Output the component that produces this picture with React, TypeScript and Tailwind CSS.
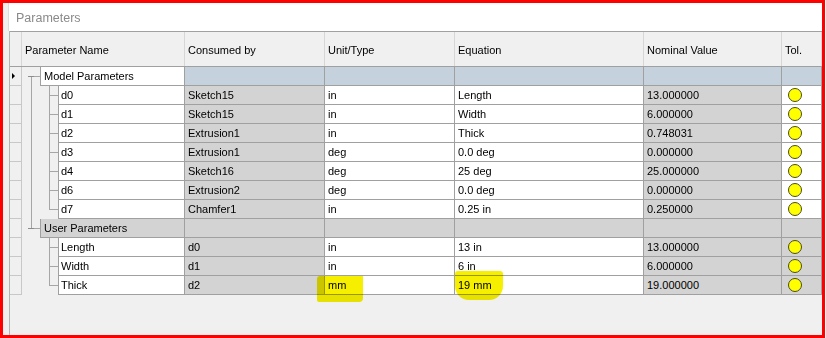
import React from "react";

/* ------------------------------------------------------------------ */
/* Parameter table data                                                */
/* ------------------------------------------------------------------ */

type Group = { kind: "group"; name: string; group: "model" | "user" };
type Item = {
  kind: "item";
  name: string;
  consumed: string;
  unit: string;
  eq: string;
  nominal: string;
  group: "model" | "user";
  last?: boolean;
  mark?: boolean;
};

const ROWS: (Group | Item)[] = [
  { kind: "group", name: "Model Parameters", group: "model" },
  { kind: "item", name: "d0", consumed: "Sketch15", unit: "in", eq: "Length", nominal: "13.000000", group: "model" },
  { kind: "item", name: "d1", consumed: "Sketch15", unit: "in", eq: "Width", nominal: "6.000000", group: "model" },
  { kind: "item", name: "d2", consumed: "Extrusion1", unit: "in", eq: "Thick", nominal: "0.748031", group: "model" },
  { kind: "item", name: "d3", consumed: "Extrusion1", unit: "deg", eq: "0.0 deg", nominal: "0.000000", group: "model" },
  { kind: "item", name: "d4", consumed: "Sketch16", unit: "deg", eq: "25 deg", nominal: "25.000000", group: "model" },
  { kind: "item", name: "d6", consumed: "Extrusion2", unit: "deg", eq: "0.0 deg", nominal: "0.000000", group: "model" },
  { kind: "item", name: "d7", consumed: "Chamfer1", unit: "in", eq: "0.25 in", nominal: "0.250000", group: "model", last: true },
  { kind: "group", name: "User Parameters", group: "user" },
  { kind: "item", name: "Length", consumed: "d0", unit: "in", eq: "13 in", nominal: "13.000000", group: "user" },
  { kind: "item", name: "Width", consumed: "d1", unit: "in", eq: "6 in", nominal: "6.000000", group: "user" },
  { kind: "item", name: "Thick", consumed: "d2", unit: "mm", eq: "19 mm", nominal: "19.000000", group: "user", last: true, mark: true },
];

const LINE = "#a6a6a6";

/* ------------------------------------------------------------------ */
/* Small drawings                                                      */
/* ------------------------------------------------------------------ */

function TreeGroup({ group }: { group: "model" | "user" }) {
  return (
    <svg width="18" height="19" className="shrink-0">
      <line x1="9.5" y1={group === "model" ? 9.5 : 0} x2="9.5" y2={group === "model" ? 19 : 9.5} stroke={LINE} />
      <line x1="9" y1="9.5" x2="18" y2="9.5" stroke={LINE} />
      <line x1="6" y1="9.5" x2="12" y2="9.5" stroke="#8c8c8c" />
    </svg>
  );
}

function TreeItem({ group, last }: { group: "model" | "user"; last?: boolean }) {
  return (
    <svg width="36" height="19" className="shrink-0">
      {group === "model" && <line x1="9.5" y1="0" x2="9.5" y2="19" stroke={LINE} />}
      <line x1="27.5" y1="0" x2="27.5" y2={last ? 9.5 : 19} stroke={LINE} />
      <line x1="27" y1="9.5" x2="36" y2="9.5" stroke={LINE} />
    </svg>
  );
}

function TolDot() {
  return (
    <svg width="16" height="16" className="ml-[2px]">
      <circle cx="8" cy="8" r="6.5" fill="#ffff00" stroke="#4a4a20" strokeWidth="1" />
    </svg>
  );
}

/* ------------------------------------------------------------------ */
/* Cells                                                               */
/* ------------------------------------------------------------------ */

function Cell({
  w,
  bg,
  children,
  className = "",
}: {
  w: string;
  bg: string;
  children?: React.ReactNode;
  className?: string;
}) {
  return (
    <div className={`${w} ${bg} ${className} relative shrink-0 h-[19px] border-r border-b border-[#a0a0a0] pl-[3px] leading-[18px] whitespace-nowrap`}>
      {children}
    </div>
  );
}

function HeadCell({ w, children }: { w: string; children?: React.ReactNode }) {
  return (
    <div className={`${w} shrink-0 h-full border-r border-[#d6d6d6] pl-[3px] pt-[3px] flex items-center`}>
      {children}
    </div>
  );
}

/* ------------------------------------------------------------------ */
/* Page                                                                */
/* ------------------------------------------------------------------ */

export default function App() {
  return (
    <div className="w-[826px] h-[338px] bg-white pr-px" style={{ fontFamily: '"Liberation Sans", Arial, sans-serif' }}>
      <div className="h-full border-[3px] border-[#ff0000] bg-[#f0f0f0] flex flex-col overflow-hidden">
        {/* Title */}
        <div className="h-[28px] shrink-0 ml-[5px] bg-white border-l border-[#dcdcdc] pl-[7px] pt-[2px] flex items-center text-[12.5px] text-[#8a8a8a]">
          Parameters
        </div>

        {/* Grid */}
        <div className="flex-1 pl-[6px]">
          <div className="h-full border-l border-[#b4b4b4] text-[11px] text-black">
            {/* Header */}
            <div className="flex h-[36px] bg-[#f0f0f0] border-t border-b border-[#a0a0a0]">
              <HeadCell w="w-[12px]" />
              <HeadCell w="w-[163px]">Parameter Name</HeadCell>
              <HeadCell w="w-[140px]">Consumed by</HeadCell>
              <HeadCell w="w-[130px]">Unit/Type</HeadCell>
              <HeadCell w="w-[189px]">Equation</HeadCell>
              <HeadCell w="w-[138px]">Nominal Value</HeadCell>
              <HeadCell w="w-[40px]">Tol.</HeadCell>
            </div>

            {ROWS.map((r, i) => {
              const rowHead = (
                <div className="w-[12px] shrink-0 h-[19px] border-r border-b border-[#c8c8c8] flex items-center pl-[2px]">
                  {i === 0 && <span className="block w-0 h-0 border-y-[3px] border-y-transparent border-l-[3px] border-l-black" />}
                </div>
              );

              if (r.kind === "group") {
                const bg = r.group === "model" ? "bg-[#c5d2de]" : "bg-[#d3d3d3]";
                return (
                  <div key={r.name} className="flex">
                    {rowHead}
                    <div className="w-[163px] shrink-0 flex h-[19px]">
                      <TreeGroup group={r.group} />
                      <div className={`flex-1 h-[19px] border border-t-0 border-[#a0a0a0] pl-[3px] leading-[18px] ${r.group === "model" ? "bg-white" : "bg-[#d3d3d3]"}`}>
                        {r.name}
                      </div>
                    </div>
                    <Cell w="w-[140px]" bg={bg} />
                    <Cell w="w-[130px]" bg={bg} />
                    <Cell w="w-[189px]" bg={bg} />
                    <Cell w="w-[138px]" bg={bg} />
                    <Cell w="w-[40px]" bg={bg} />
                  </div>
                );
              }

              const tolBg = r.group === "model" ? "bg-white" : "bg-[#d3d3d3]";
              return (
                <div key={r.name} className="flex">
                  {rowHead}
                  <div className="w-[163px] shrink-0 flex h-[19px]">
                    <TreeItem group={r.group} last={r.last} />
                    <div className="flex-1 h-[19px] bg-white border border-t-0 border-[#a0a0a0] pl-[2px] leading-[18px]">
                      {r.name}
                    </div>
                  </div>
                  <Cell w="w-[140px]" bg="bg-[#d3d3d3]">{r.consumed}</Cell>
                  <Cell w="w-[130px]" bg="bg-white">
                    {r.mark && (
                      <span className="absolute left-[-8px] top-0 w-[46px] h-[26px] bg-[#f6ef00] mix-blend-multiply rounded-br-[4px] rounded-bl-[2px] rounded-tl-[3px]" />
                    )}
                    <span className="relative">{r.unit}</span>
                  </Cell>
                  <Cell w="w-[189px]" bg="bg-white">
                    {r.mark && (
                      <span className="absolute left-0 top-[-5px] w-[48px] h-[29px] bg-[#f6ef00] mix-blend-multiply rounded-t-[3px] rounded-b-[14px]" />
                    )}
                    <span className="relative">{r.eq}</span>
                  </Cell>
                  <Cell w="w-[138px]" bg="bg-[#d3d3d3]">{r.nominal}</Cell>
                  <Cell w="w-[40px]" bg={tolBg} className="flex items-center">
                    <TolDot />
                  </Cell>
                </div>
              );
            })}
          </div>
        </div>
      </div>
    </div>
  );
}
